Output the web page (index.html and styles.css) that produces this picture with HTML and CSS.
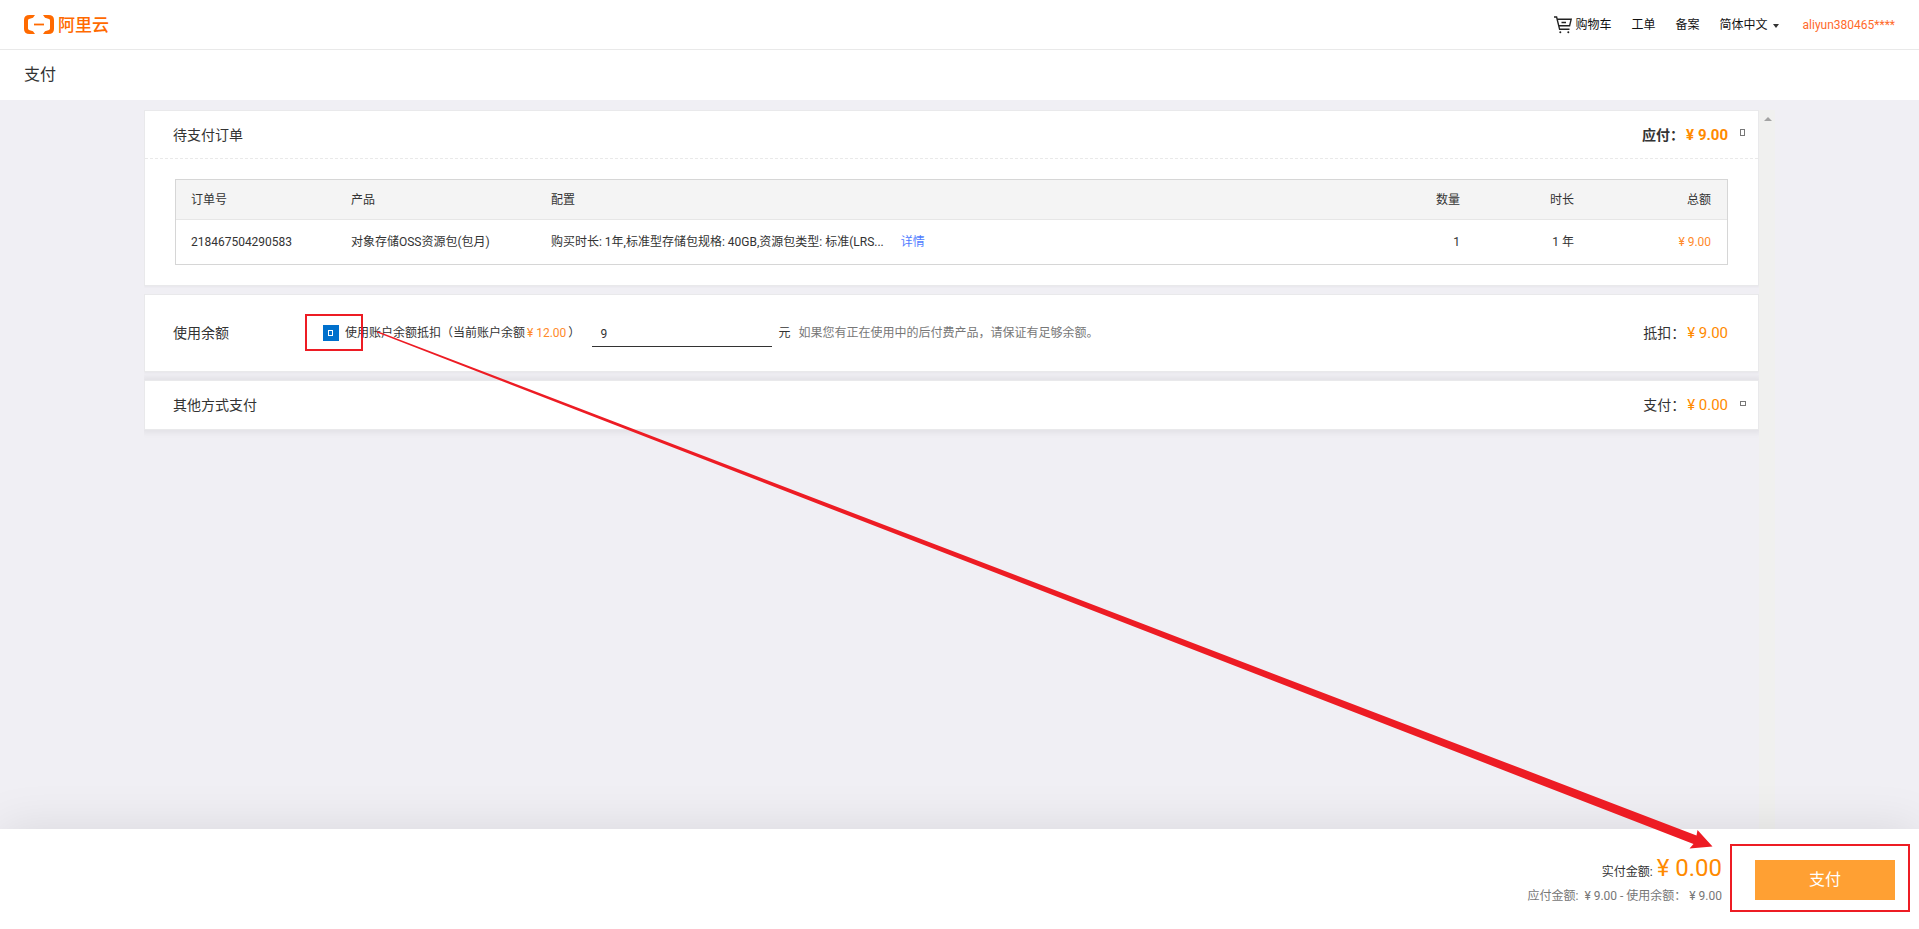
FILE: index.html
```html
<!DOCTYPE html>
<html lang="zh-CN">
<head>
    <meta charset="UTF-8">
    <meta name="viewport" content="width=device-width, initial-scale=1.0">
    <title>支付</title>
    <link rel="stylesheet" href="styles.css">
</head>
<body>

    <header class="topbar">
        <a class="logo" href="#">
            <svg width="30" height="19" viewBox="0 0 30 19" fill="#ff6a00">
                <path d="M11 0H5.500Q0 0 0 5V14Q0 19 5.500 19H11L9 16.200 5 15Q4 14.600 4 13.600V5.400Q4 4.400 5 4L9 2.800Z"/>
                <path d="M19 0H24.500Q30 0 30 5V14Q30 19 24.500 19H19L21 16.200 25 15Q26 14.600 26 13.600V5.400Q26 4.400 25 4L21 2.800Z"/>
                <path d="M10 8.600H20V10.400H10Z"/>
            </svg>
            <span>阿里云</span>
        </a>
        <nav class="nav">
            <a class="cart" href="#">
                <svg width="18" height="18" viewBox="0 0 18 18" fill="none" stroke="#222" stroke-width="1.400">
                    <path d="M0 1H2.600L5.600 13.300H15.500M3.300 3.200H17.200L15.600 9.800H5M7.500 6.500H12"/>
                    <circle cx="6.300" cy="16.200" r="1" fill="#222" stroke="none"/>
                    <circle cx="14.300" cy="16.200" r="1" fill="#222" stroke="none"/>
                </svg>
                购物车
            </a>
            <a href="#">工单</a>
            <a href="#">备案</a>
            <a class="lang" href="#">简体中文</a>
            <a class="account" href="#">aliyun380465****</a>
        </nav>
    </header>

    <h1 class="page-title">支付</h1>

    <main class="main">
        <div class="content">
            <section class="panel">
                <div class="panel-head dashed">
                    <h2>待支付订单</h2>
                    <div class="sum strong">应付：<b>¥ 9.00</b></div>
                    <button class="toggle" type="button" aria-label="收起"></button>
                </div>
                <div class="panel-body">
                    <table class="orders">
                        <thead>
                            <tr>
                                <th class="col-id">订单号</th>
                                <th class="col-product">产品</th>
                                <th>配置</th>
                                <th class="col-num">数量</th>
                                <th class="col-num">时长</th>
                                <th class="col-total">总额</th>
                            </tr>
                        </thead>
                        <tbody>
                            <tr>
                                <td>218467504290583</td>
                                <td>对象存储OSS资源包(包月)</td>
                                <td>购买时长: 1年,标准型存储包规格: 40GB,资源包类型: 标准(LRS... <a class="detail" href="#">详情</a></td>
                                <td class="col-num">1</td>
                                <td class="col-num">1 年</td>
                                <td class="col-total price">¥ 9.00</td>
                            </tr>
                        </tbody>
                    </table>
                </div>
            </section>

            <section class="panel balance">
                <h2>使用余额</h2>
                <div class="balance-form">
                    <input type="checkbox" id="useBalance" checked>
                    <label for="useBalance">使用账户余额抵扣（当前账户余额<span class="price">¥ 12.00</span>）</label>
                    <input type="text" id="amount" value="9" aria-label="抵扣金额">
                    <label for="amount">元</label>
                    <span class="hint">如果您有正在使用中的后付费产品，请保证有足够余额。</span>
                </div>
                <div class="sum">抵扣：<b>¥ 9.00</b></div>
            </section>

            <section class="panel raised">
                <div class="panel-head">
                    <h2>其他方式支付</h2>
                    <div class="sum">支付：<b>¥ 0.00</b></div>
                    <button class="toggle wide" type="button" aria-label="展开"></button>
                </div>
            </section>
        </div>
        <div class="scroll-track"></div>
    </main>

    <footer class="paybar">
        <div class="totals">
            <p class="total">实付金额: <b>¥ 0.00</b></p>
            <p class="breakdown">应付金额: &nbsp;¥ 9.00 - 使用余额： ¥ 9.00</p>
        </div>
        <button class="pay" type="button">支付</button>
    </footer>

    <!-- red guide: tick box -> pay button -->
    <svg class="guide" viewBox="0 0 1919 929" preserveAspectRatio="none">
        <rect x="306" y="315" width="56" height="35"/>
        <rect x="1731" y="845" width="178" height="66"/>
        <path d="M377 331L1696.500 835.500 1697.500 830 1712.500 846.500 1689.500 848.500 1693.500 844 377 332.500Z"/>
    </svg>

</body>
</html>
```
FILE: styles.css
```css
*, *::before, *::after {
    box-sizing: border-box;
}
body {
    display: flex;
    flex-direction: column;
    min-height: 100vh;
    margin: 0;
    font-family: Roboto, "Noto Sans CJK SC", sans-serif;
    font-size: 12px;
    line-height: 20px;
    color: #333;
    background-color: #f0eff4;
}
h1, h2, p {
    margin: 0;
    font-weight: normal;
}
a {
    color: inherit;
    text-decoration: none;
}

/* header */
.topbar {
    display: flex;
    justify-content: space-between;
    align-items: center;
    height: 50px;
    padding: 0 24px;
    background-color: #fff;
    border-bottom: 1px solid #e9e9e9;
}
.logo {
    display: flex;
    align-items: center;
    gap: 4px;
    font-size: 17px;
    font-weight: 500;
    color: #ff6a00;
}
.nav {
    display: flex;
    gap: 20px;
    color: #111;
}
.cart {
    display: flex;
    align-items: center;
    gap: 4px;
}
.lang::after {
    content: "";
    display: inline-block;
    margin-left: 5px;
    vertical-align: 1px;
    border: 3px solid transparent;
    border-top: 4px solid #333;
    border-bottom: 0;
}
.account {
    margin-left: 4px;
    color: #ff6a2a;
}
.page-title {
    height: 50px;
    padding: 0 24px;
    font-size: 16px;
    line-height: 50px;
    background-color: #fff;
}

/* panels */
.main {
    display: flex;
    flex: 1;
    width: 85%;
    margin: 10px auto 0;
}
.content {
    flex: 1;
    overflow: hidden;
}
.scroll-track {
    width: 16px;
    background-color: #f0f0ef;
}
.scroll-track::before {
    content: "";
    display: block;
    width: 8px;
    margin: 7px 0 0 5px;
    border: 4px solid transparent;
    border-top: 0;
    border-bottom-color: #a3a3a3;
}
.panel {
    margin-bottom: 8px;
    background-color: #fff;
    border: 1px solid #e9e9eb;
    box-shadow: 0 1px 2px rgba(0, 0, 0, 0.04);
}
.raised {
    box-shadow: 0 0 6px 3px rgba(0, 0, 0, 0.06);
}
.panel-head {
    display: flex;
    align-items: center;
    height: 48px;
    padding-left: 28px;
}
.dashed {
    border-bottom: 1px dashed #e9e9e9;
}
h2 {
    font-size: 14px;
}
.sum {
    margin-left: auto;
    font-size: 14px;
}
.sum b {
    margin-left: 2px;
    font-size: 15px;
    font-weight: normal;
    color: #ff8a00;
}
.strong, .strong b {
    font-weight: bold;
}
.toggle {
    width: 30px;
    height: 20px;
    padding: 0 0 0 12px;
    border: 0;
    background: none;
}
.toggle::before {
    content: "";
    display: block;
    width: 5px;
    height: 7px;
    margin-bottom: 4px;
    border: 1px solid #777;
}
.toggle.wide::before {
    width: 6px;
    height: 5px;
}
.panel-body {
    padding: 20px 30px;
}

/* order table */
.orders {
    width: 100%;
    table-layout: fixed;
    border: 1px solid #d6d6d6;
    border-spacing: 0;
}
.orders th, .orders td {
    padding: 0;
    font-weight: normal;
    text-align: left;
    white-space: nowrap;
}
.orders th {
    height: 40px;
    background-color: #f4f4f4;
    border-bottom: 1px solid #e6e6e6;
}
.orders td {
    height: 44px;
}
.orders tr > :first-child {
    padding-left: 15px;
}
.orders .col-id {
    width: 175px;
}
.orders .col-product {
    width: 200px;
}
.orders .col-num {
    width: 114px;
    text-align: right;
}
.orders .col-total {
    width: 153px;
    padding-right: 16px;
    text-align: right;
}
.price {
    color: #ff8a2a;
}
.detail {
    margin-left: 14px;
    color: #4f7cff;
}

/* balance */
.balance {
    display: flex;
    align-items: center;
    height: 78px;
    padding: 0 30px 0 28px;
}
.balance h2 {
    width: 150px;
}
.balance-form {
    display: flex;
    align-items: center;
}
.balance-form .price {
    margin: 0 2px;
}
#useBalance {
    display: flex;
    align-items: center;
    justify-content: center;
    appearance: none;
    width: 16px;
    height: 16px;
    margin: 0 6px 0 0;
    background-color: #0070cc;
}
#useBalance::before {
    content: "";
    width: 5px;
    height: 6px;
    border: 1px solid #fff;
}
#amount {
    width: 180px;
    height: 28px;
    margin: 0 6px 0 12px;
    padding: 2px 8px 0;
    font: inherit;
    color: #333;
    border: 0;
    border-bottom: 1px solid #333;
}
.hint {
    margin-left: 8px;
    color: #777;
}

/* footer */
.paybar {
    display: flex;
    justify-content: flex-end;
    gap: 33px;
    height: 100px;
    padding: 24px 24px 0;
    background-color: #fff;
    box-shadow: 0 0 50px rgba(0, 0, 0, 0.1);
}
.totals {
    text-align: right;
}
.total {
    line-height: 30px;
}
.total b {
    margin-left: 1px;
    font-size: 24px;
    font-weight: normal;
    color: #ff8a00;
}
.breakdown {
    line-height: 18px;
    color: #777;
}
.pay {
    width: 140px;
    height: 40px;
    margin-top: 7px;
    padding: 0 0 4px;
    font-family: inherit;
    font-size: 16px;
    color: #fff;
    background-color: #ffa033;
    border: 0;
}

.guide {
    position: absolute;
    top: 0;
    left: 0;
    width: 100%;
    height: 100%;
    fill: #ed1c24;
    pointer-events: none;
}
.guide rect {
    fill: none;
    stroke: #ed1c24;
    stroke-width: 2;
}
```
